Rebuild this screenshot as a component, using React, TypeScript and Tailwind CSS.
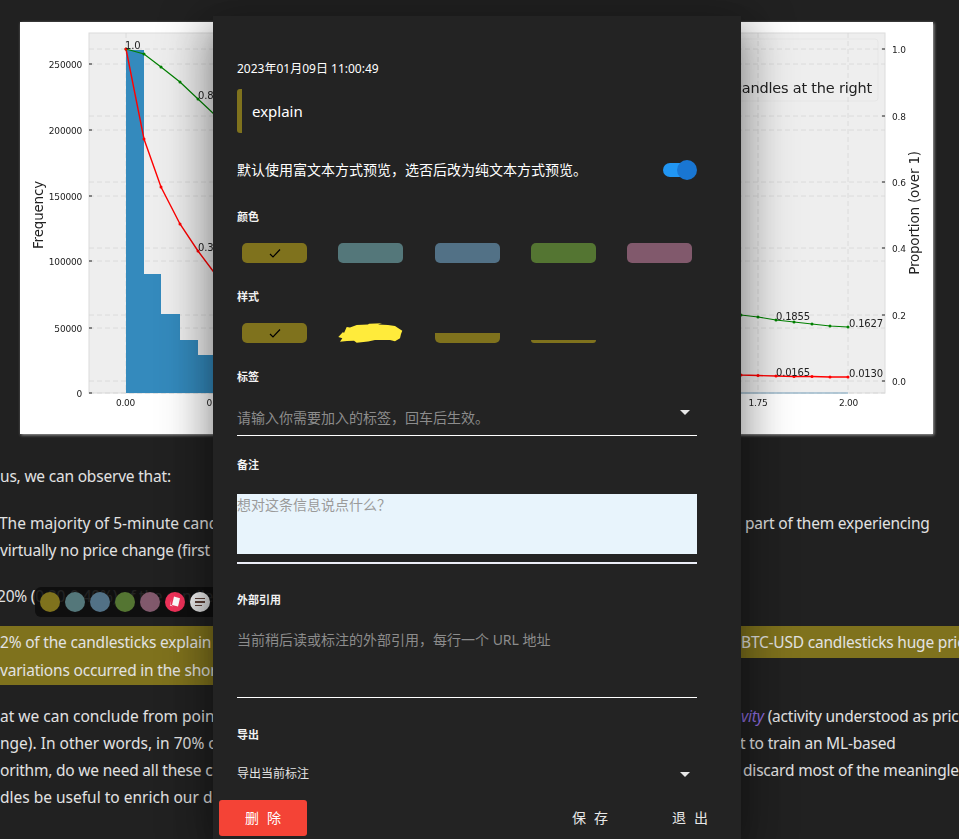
const font = "font-['Noto_Sans','Noto_Sans_CJK_SC',sans-serif]";

function Chart() {
  const green = "126,49 144,54 161,67 180,82 198,99 216,116 741,315 758,317 776,320 794,322 812,324 830,326 848,327";
  const red = "126,49 144,139 161,187 180,224 198,251 216,275 741,375 758,375.5 776,376 794,376.5 812,376.5 830,377 848,377";
  const greenDots = green.split(" ").map((p) => p.split(",").map(Number));
  const redDots = red.split(" ").map((p) => p.split(",").map(Number));
  const ticksLeft = [[64, "250000"], [130, "200000"], [196, "150000"], [261, "100000"], [328, "50000"], [393, "0"]] as const;
  const ticksRight = [[49, "1.0"], [116, "0.8"], [182, "0.6"], [248, "0.4"], [315, "0.2"], [381, "0.0"]] as const;
  return (
    <svg viewBox="20 22 913 412" className="block w-full h-full blur-[0.3px]" fontFamily="DejaVu Sans, sans-serif" fill="#222">
      <rect x="89" y="33" width="796" height="360" fill="#eeeeee" stroke="#dcdcdc" />
      <rect x="300" y="39" width="578" height="62" rx="3" fill="#eeeeee" stroke="#e6e6e6" />
      {ticksLeft.map(([y]) => (
        <line key={y} x1="89" x2="885" y1={y} y2={y} stroke="#d6d6d6" strokeWidth="0.8" strokeDasharray="5 3" />
      ))}
      {ticksRight.map(([y]) => (
        <line key={y} x1="89" x2="885" y1={y} y2={y} stroke="#d6d6d6" strokeWidth="0.8" strokeDasharray="5 3" />
      ))}
      {[126, 216, 758, 848].map((x) => (
        <line key={x} x1={x} x2={x} y1="33" y2="393" stroke="#d6d6d6" strokeWidth="0.8" strokeDasharray="5 3" />
      ))}
      <polygon points="126,393 126,50 144,50 144,274 161,274 161,314 180,314 180,340 198,340 198,355 216,355 216,393" fill="#348abd" />
      <line x1="216" x2="848" y1="393" y2="393" stroke="#7fa9c4" />
      <polyline points={green} fill="none" stroke="#008000" strokeWidth="1.2" />
      <polyline points={red} fill="none" stroke="#ff0000" strokeWidth="1.4" />
      {greenDots.map(([x, y]) => (
        <circle key={x} cx={x} cy={y} r="1.5" fill="#008000" />
      ))}
      {redDots.map(([x, y]) => (
        <circle key={x} cx={x} cy={y} r="1.5" fill="#ff0000" />
      ))}
      <g fontSize="10">
        <text x="125" y="49">1.0</text>
        <text x="198" y="99">0.8</text>
        <text x="198" y="251">0.3</text>
        <text x="776" y="320">0.1855</text>
        <text x="849" y="327">0.1627</text>
        <text x="776" y="376">0.0165</text>
        <text x="849" y="377">0.0130</text>
      </g>
      <g fontSize="9">
        {ticksLeft.map(([y, t]) => (
          <g key={t}>
            <text x="82" y={y + 4} textAnchor="end">{t}</text>
            <line x1="89" x2="92" y1={y} y2={y} stroke="#222" />
          </g>
        ))}
        {ticksRight.map(([y, t]) => (
          <g key={t}>
            <text x="892" y={y + 4}>{t}</text>
            <line x1="885" x2="882" y1={y} y2={y} stroke="#222" />
          </g>
        ))}
        <text x="125.5" y="406" textAnchor="middle">0.00</text>
        <text x="216" y="406" textAnchor="middle">0.25</text>
        <text x="758" y="406" textAnchor="middle">1.75</text>
        <text x="848.5" y="406" textAnchor="middle">2.00</text>
      </g>
      <text x="872" y="93" fontSize="14.5" textAnchor="end">Proportion of candles at the right</text>
      <text transform="translate(43 215) rotate(-90)" fontSize="13.5" textAnchor="middle">Frequency</text>
      <text transform="translate(919 213) rotate(-90)" fontSize="13.5" textAnchor="middle">Proportion (over 1)</text>
    </svg>
  );
}

function Check() {
  return (
    <svg width="12" height="9" viewBox="0 0 12 9" fill="none" stroke="#000" strokeWidth="1.2">
      <path d="M1 5l3 3l7-7.5" />
    </svg>
  );
}

function Toolbar() {
  return (
    <div className="absolute left-[35px] top-[587px] w-[220px] h-[30px] rounded-md bg-[#0d0d0d]/90 flex items-center gap-[5px] pl-[5px]">
      {["bg-[#7f721d]", "bg-[#54777a]", "bg-[#527186]", "bg-[#547532]", "bg-[#81596c]"].map((c) => (
        <span key={c} className={`w-5 h-5 rounded-full ${c}`} />
      ))}
      <span className="w-5 h-5 rounded-full bg-[#f0325a] flex items-center justify-center">
        <svg width="14" height="14" viewBox="0 0 14 14" fill="#fff">
          <path d="M6 1.5l6 1.8l-2 8.2l-6-1.6z" />
          <path d="M3.6 4.5l-1.6 4.5l3 2.6l-3-1z" />
        </svg>
      </span>
      <span className="w-5 h-5 rounded-full bg-gradient-to-br from-white to-[#cfcfcf] flex flex-col items-center justify-center gap-[2px]">
        <span className="block w-[10px] h-[1.5px] bg-[#5d4037]" />
        <span className="block w-[10px] h-[1.5px] bg-[#5d4037]" />
        <span className="block w-[7px] h-[1.5px] bg-[#5d4037] self-start ml-[5px]" />
      </span>
    </div>
  );
}

function Label({ children, className }: { children: React.ReactNode; className: string }) {
  return <div className={`text-[11px] font-bold leading-4 text-[#f2f2f2] ${className}`}>{children}</div>;
}

function Arrow({ className }: { className: string }) {
  return <span className={`w-0 h-0 border-x-[5px] border-t-[5px] border-x-transparent border-t-[#e8e8e8] ${className}`} />;
}

function Dialog() {
  return (
    <div className={`absolute left-[213px] top-[16px] w-[528px] h-[823px] bg-[#232323] flex flex-col text-white tracking-normal overflow-hidden shadow-[0_11px_15px_-7px_rgba(0,0,0,0.2),0_24px_38px_3px_rgba(0,0,0,0.14),0_9px_46px_8px_rgba(0,0,0,0.3)] ${font}`}>
      <div className="pl-6 pr-[44px]">
        <div className="pt-[44px] text-xs leading-[18px]">2023年01月09日 11:00:49</div>
        <div className="mt-[11px] h-[44px] border-l-[5px] border-[#7f721d] rounded-[3px] flex items-center pl-[10px] text-[15px]">explain</div>
        <div className="mt-[27px] h-5 flex items-center justify-between text-sm">
          <span>默认使用富文本方式预览，选否后改为纯文本方式预览。</span>
          <span className="relative w-[34px] h-5 flex items-center">
            <span className="block w-[28px] h-[14px] rounded-full bg-[#2196f3]" />
            <span className="absolute right-0 top-0 w-5 h-5 rounded-full bg-[#1976d2]" />
          </span>
        </div>
        <Label className="mt-[29px]">颜色</Label>
        <div className="mt-[18px] px-[5px] flex justify-between">
          <span className="w-[65px] h-5 rounded-[5px] bg-[#7f721d] flex items-center justify-center"><Check /></span>
          <span className="w-[65px] h-5 rounded-[5px] bg-[#54777a]" />
          <span className="w-[65px] h-5 rounded-[5px] bg-[#527186]" />
          <span className="w-[65px] h-5 rounded-[5px] bg-[#547532]" />
          <span className="w-[65px] h-5 rounded-[5px] bg-[#81596c]" />
        </div>
        <Label className="mt-[26px]">样式</Label>
        <div className="mt-[18px] px-[5px] flex justify-between items-end h-5">
          <span className="w-[65px] h-5 rounded-[5px] bg-[#7f721d] flex items-center justify-center"><Check /></span>
          <svg width="65" height="20" viewBox="0 0 65 20" fill="#ffeb3b" className="block">
            <path d="M0.3 14L5 9L6 10L8.7 4L12 4.5L18.7 2L30 1.5L31 0.8L44 0.3L40 1.5L50 2L57 3L60 5L64.3 7.7L63 11L62 15.3L57 18.3L52 17L37 17L30 18.5L18.7 19.7L16 17.7L9 18L2 18.7L4.3 15.3z" />
          </svg>
          <span className="w-[65px] h-[10px] rounded-b-[5px] bg-[#7f721d]" />
          <span className="w-[65px] h-[3px] rounded-b-[5px] bg-[#7f721d]" />
          <span className="w-[65px] h-5" />
        </div>
        <Label className="mt-[26px]">标签</Label>
        <div className="mt-[10px] h-[41px] pt-[5px] border-b border-white flex items-center justify-between text-sm text-[#8c8c8c]">
          <span>请输入你需要加入的标签，回车后生效。</span>
          <Arrow className="mr-[7px] mb-[10px]" />
        </div>
        <Label className="mt-[21px]">备注</Label>
        <div className="mt-[21px] h-[60px] bg-[#e8f4fc] text-sm leading-5 pt-px text-[#9a9a9a]">想对这条信息说点什么？</div>
        <div className="mt-[8px] h-[2px] bg-[#eceef8]" />
        <Label className="mt-[28px]">外部引用</Label>
        <div className="mt-[22px] h-[68px] border-b border-white text-sm leading-5 text-[#8c8c8c]">当前稍后读或标注的外部引用，每行一个 URL 地址</div>
        <Label className="mt-[29px]">导出</Label>
        <div className="mt-[21px] h-5 flex items-center justify-between text-xs text-[#e4e4e4]">
          <span>导出当前标注</span>
          <Arrow className="mr-[7px]" />
        </div>
      </div>
      <div className="mt-[16px] pl-[6px] pr-[7px] flex justify-between text-sm">
        <button className="w-[88px] h-9 pl-[8px] rounded-[3px] bg-[#f44336] text-white tracking-[8px]">删除</button>
        <div className="flex gap-3 text-[#e8e8e8]">
          <button className="w-[88px] h-9 pl-[8px] tracking-[8px]">保存</button>
          <button className="w-[88px] h-9 pl-[8px] tracking-[8px]">退出</button>
        </div>
      </div>
    </div>
  );
}

function Line({ left, right, className, leftClass }: { left: string; right?: React.ReactNode; className?: string; leftClass?: string }) {
  return (
    <div className={`grid grid-cols-[213px_528px_218px] whitespace-nowrap overflow-hidden ${className ?? "h-[27px] leading-[27px]"}`}>
      <div className="overflow-hidden"><div className={leftClass}>{left}</div></div>
      <div />
      <div className="overflow-hidden">{right}</div>
    </div>
  );
}

export default function App() {
  return (
    <div className={`relative min-h-screen h-[839px] overflow-hidden bg-[#212121] text-[#e2e2e2] text-[15.5px] tracking-[-0.2px] ${font}`}>
      <div className="pt-[22px]">
        <div className="ml-[20px] w-[913px] h-[412px] bg-white shadow-[1px_1px_3px_rgba(200,200,200,0.8)]">
          <Chart />
        </div>
        <Line className="mt-[29px] h-[27px] leading-[27px]" left="us, we can observe that:" />
        <Line className="mt-[20px] h-[27px] leading-[27px]" leftClass="-ml-px tracking-normal" left="The majority of 5-minute candlesticks" right={<span className="pl-[4px]">part of them experiencing</span>} />
        <Line left="virtually no price change (first bins)" />
        <Line className="mt-[19px] h-[27px] leading-[27px]" leftClass="-ml-[3px]" left="20% (0.20-0.40%) of the candlesticks have" />
        <div className="mt-[16px]">
          <Line className="bg-[#7f721d] h-8 leading-8" left="2% of the candlesticks explain most of the range" right="BTC-USD candlesticks huge price" />
          <div className="w-[741px]">
            <Line className="bg-[#7f721d] h-[27px] leading-[25px]" left="variations occurred in the shortest time" />
          </div>
        </div>
        <Line className="mt-[18px] h-[27px] leading-[27px]" leftClass="tracking-normal" left="at we can conclude from point" right={<><em className="text-[#8f6ddf]">vity</em> (activity understood as price</>} />
        <Line leftClass="tracking-normal" left="nge). In other words, in 70% of the" right={<span className="-ml-[1px]">t to train an ML-based</span>} />
        <Line left="orithm, do we need all these candles" right={<span className="pl-[2px]">discard most of the meaningless</span>} />
        <Line leftClass="tracking-normal" left="dles be useful to enrich our data" />
      </div>
      <Toolbar />
      <Dialog />
    </div>
  );
}
